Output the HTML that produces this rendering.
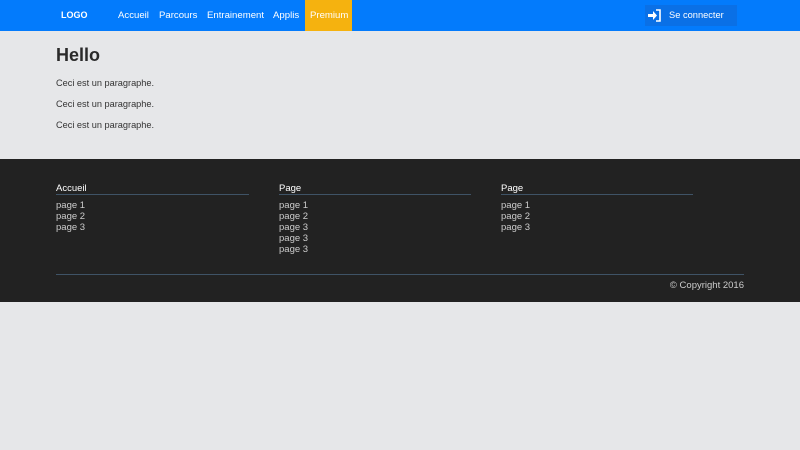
<!DOCTYPE html>
<html><head><meta charset="utf-8"><style>
*{margin:0;padding:0;box-sizing:border-box}
body{width:800px;height:450px;background:#e6e7e9;font-family:"Liberation Sans",sans-serif;position:relative;overflow:hidden}
.a{position:absolute;white-space:nowrap}
nav{position:absolute;left:0;top:0;width:800px;height:31px;background:#037bfc}
nav .a{color:#fff;font-size:9.6px;top:10px}
.p{font-size:9.2px;color:#333}
footer{position:absolute;left:0;top:159px;width:800px;height:143px;background:#222}
footer .a{color:#ccc;font-size:9.5px;line-height:11px}
footer .h{color:#fff}
.ln{position:absolute;height:1px;background:#3f5366}
</style></head><body>
<nav>
<div class="a" style="left:61px;font-weight:bold;font-size:9px">LOGO</div>
<div class="a" style="left:118px">Accueil</div>
<div class="a" style="left:159px">Parcours</div>
<div class="a" style="left:207px">Entrainement</div>
<div class="a" style="left:273px">Applis</div>
<div style="position:absolute;left:305px;top:0;width:47px;height:31px;background:#f5b20f"></div>
<div class="a" style="left:310px">Premium</div>
<div style="position:absolute;left:645px;top:5px;width:92px;height:21px;background:#0a70e6"></div>
<svg class="a" style="left:648px;top:9px" width="14" height="13" viewBox="0 0 14 13"><path d="M0 5h5V2l4 4.5-4 4.5V8H0z" fill="#fff"/><path d="M8 1h4v11H8" fill="none" stroke="#fff" stroke-width="1.6"/></svg>
<div class="a" style="left:669px;font-size:9.3px">Se connecter</div>
</nav>
<div class="a" style="left:56px;top:45px;font-size:18px;font-weight:bold;color:#2a2a2a">Hello</div>
<div class="a p" style="left:56px;top:78px">Ceci est un paragraphe.</div>
<div class="a p" style="left:56px;top:99px">Ceci est un paragraphe.</div>
<div class="a p" style="left:56px;top:120px">Ceci est un paragraphe.</div>
<footer>
<div class="a h" style="left:56px;top:24px">Accueil</div>
<div class="ln" style="left:56px;top:35px;width:193px"></div>
<div class="a" style="left:56px;top:41px">page 1<br>page 2<br>page 3</div>
<div class="a h" style="left:279px;top:24px">Page</div>
<div class="ln" style="left:279px;top:35px;width:192px"></div>
<div class="a" style="left:279px;top:41px">page 1<br>page 2<br>page 3<br>page 3<br>page 3</div>
<div class="a h" style="left:501px;top:24px">Page</div>
<div class="ln" style="left:501px;top:35px;width:192px"></div>
<div class="a" style="left:501px;top:41px">page 1<br>page 2<br>page 3</div>
<div class="ln" style="left:56px;top:115px;width:688px"></div>
<div class="a" style="right:56px;top:121px;color:#ccc">© Copyright 2016</div>
</footer>
</body></html>
